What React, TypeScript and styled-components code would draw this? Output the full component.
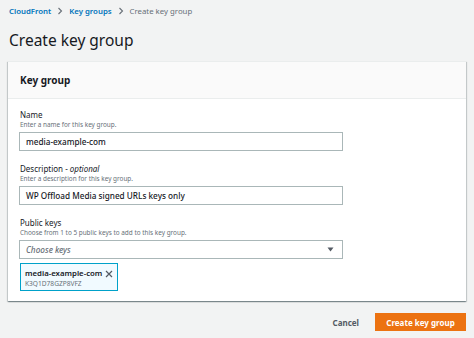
import React from "react";
import styled, { createGlobalStyle } from "styled-components";

const GlobalStyle = createGlobalStyle`
  html, body {
    margin: 0;
    padding: 0;
    background: #f2f3f3;
    font-family: "Noto Sans", "Open Sans", sans-serif;
    color: #16191f;
  }
`;

const Page = styled.div`
  width: 474px;
  height: 338px;
  padding: 0 8px;
  box-sizing: border-box;
  overflow: hidden;
`;

const Breadcrumbs = styled.nav`
  display: flex;
  align-items: center;
  gap: 5px;
  height: 22px;
  padding-left: 1px;
  font-size: 7.8px;
`;

const Crumb = styled.span<{ $current?: boolean }>`
  color: ${(p) => (p.$current ? "#687078" : "#0073bb")};
  font-weight: ${(p) => (p.$current ? 400 : 600)};
`;

const Chevron = styled.svg`
  width: 8px;
  height: 8px;
  color: #687078;
`;

const Title = styled.h1`
  margin: 8px 0 11px 0;
  padding-left: 1px;
  font-size: 15.5px;
  line-height: 20px;
  font-weight: 400;
  color: #16191f;
`;

const Panel = styled.section`
  background: #fff;
  box-shadow: 0 1px 1px 0 rgba(0, 28, 36, 0.3), 1px 1px 1px 0 rgba(0, 28, 36, 0.15),
    -1px 1px 1px 0 rgba(0, 28, 36, 0.15);
  border-top: 1px solid #eaeded;
`;

const PanelHeader = styled.header`
  height: 36px;
  display: flex;
  align-items: center;
  padding: 0 12px;
  background: #fafafa;
  border-bottom: 1px solid #eaeded;
  font-size: 10px;
  font-weight: 700;
`;

const PanelBody = styled.div`
  padding: 10px 12px 10px 11px;
  display: flex;
  flex-direction: column;
  gap: 12px;
`;

const Field = styled.div`
  display: flex;
  flex-direction: column;
`;

const Label = styled.label`
  padding-left: 1px;
  font-size: 8px;
  line-height: 11px;
  color: #16191f;
  em {
    font-style: italic;
  }
`;

const Hint = styled.div`
  padding-left: 1px;
  font-size: 6.4px;
  line-height: 10px;
  color: #687078;
  margin-bottom: 2px;
`;

const Input = styled.div<{ $placeholder?: boolean }>`
  width: 324px;
  height: 19px;
  box-sizing: border-box;
  border: 1px solid #aab7b8;
  display: flex;
  align-items: center;
  justify-content: space-between;
  padding: 0 8px 0 6px;
  font-size: 8.2px;
  font-weight: 500;
  color: ${(p) => (p.$placeholder ? "#687078" : "#16191f")};
  font-style: ${(p) => (p.$placeholder ? "italic" : "normal")};
`;

const Token = styled.div`
  margin: 4px 0 0 1px;
  width: 98px;
  height: 28px;
  box-sizing: border-box;
  border: 1px solid #00a1c9;
  background: #f1faff;
  padding: 4px 4px 0 4px;
  white-space: nowrap;
`;

const TokenTop = styled.div`
  display: flex;
  align-items: center;
  justify-content: space-between;
  font-size: 7.8px;
  font-weight: 600;
  line-height: 11px;
  color: #16191f;
`;

const TokenSub = styled.div`
  font-size: 6.6px;
  line-height: 10px;
  color: #687078;
`;

const Footer = styled.footer`
  display: flex;
  justify-content: flex-end;
  align-items: center;
  gap: 16px;
  padding-top: 12px;
`;

const LinkButton = styled.button`
  border: none;
  background: none;
  font-family: inherit;
  font-size: 8px;
  font-weight: 700;
  color: #545b64;
  padding: 0;
`;

const PrimaryButton = styled.button`
  border: none;
  background: #ec7211;
  color: #fff;
  font-family: inherit;
  font-size: 8px;
  font-weight: 700;
  height: 18px;
  width: 91px;
  padding: 0;
`;

const chevron = (
  <Chevron viewBox="0 0 8 8">
    <path d="M2.5 1 L5.5 4 L2.5 7" fill="none" stroke="currentColor" strokeWidth="1.1" />
  </Chevron>
);

export default function App() {
  return (
    <>
      <GlobalStyle />
      <Page>
        <Breadcrumbs>
          <Crumb>CloudFront</Crumb>
          {chevron}
          <Crumb>Key groups</Crumb>
          {chevron}
          <Crumb $current>Create key group</Crumb>
        </Breadcrumbs>
        <Title>Create key group</Title>
        <Panel>
          <PanelHeader>Key group</PanelHeader>
          <PanelBody>
            <Field>
              <Label>Name</Label>
              <Hint>Enter a name for this key group.</Hint>
              <Input>media-example-com</Input>
            </Field>
            <Field>
              <Label>
                Description - <em>optional</em>
              </Label>
              <Hint>Enter a description for this key group.</Hint>
              <Input>WP Offload Media signed URLs keys only</Input>
            </Field>
            <Field>
              <Label>Public keys</Label>
              <Hint>Choose from 1 to 5 public keys to add to this key group.</Hint>
              <Input $placeholder>
                Choose keys
                <svg width="7" height="5" viewBox="0 0 7 5">
                  <path d="M0.5 0.5 L6.5 0.5 L3.5 4.5 Z" fill="#545b64" />
                </svg>
              </Input>
              <Token>
                <TokenTop>
                  media-example-com
                  <svg width="8" height="8" viewBox="0 0 8 8">
                    <path d="M1 1 L7 7 M7 1 L1 7" stroke="#545b64" strokeWidth="1.2" />
                  </svg>
                </TokenTop>
                <TokenSub>K3Q1D78GZP8VFZ</TokenSub>
              </Token>
            </Field>
          </PanelBody>
        </Panel>
        <Footer>
          <LinkButton>Cancel</LinkButton>
          <PrimaryButton>Create key group</PrimaryButton>
        </Footer>
      </Page>
    </>
  );
}
